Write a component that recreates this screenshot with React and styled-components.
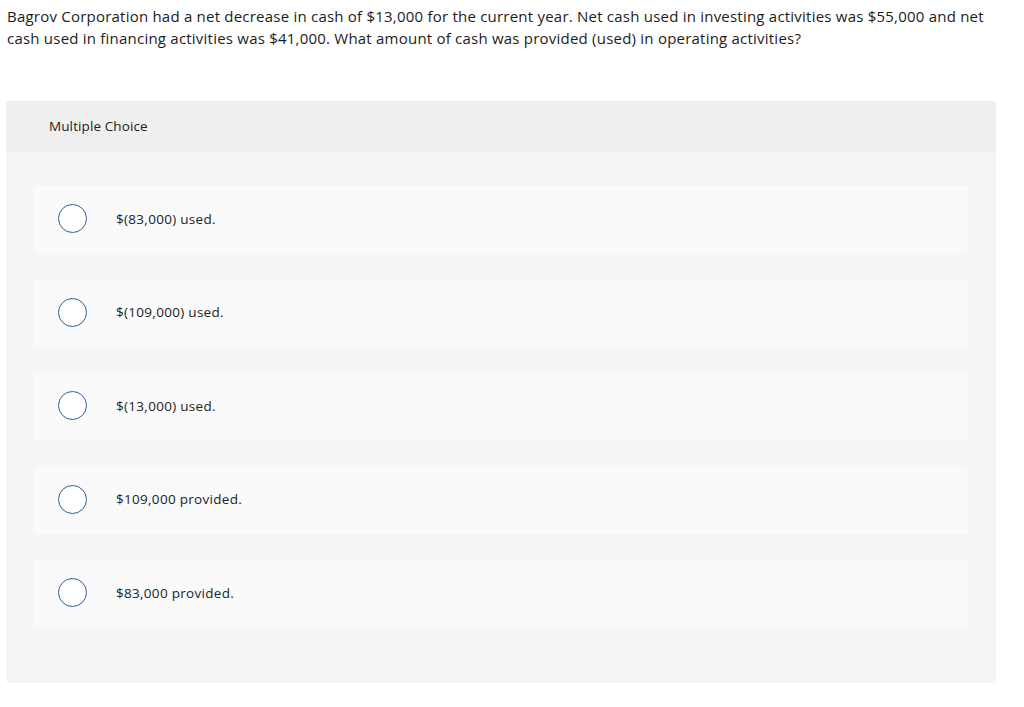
import React from "react";
import styled, { createGlobalStyle } from "styled-components";

const Global = createGlobalStyle`
  html, body { margin: 0; padding: 0; background: #fff; }
  body { font-family: "Open Sans", "Lato", sans-serif; color: #222; }
`;

const Page = styled.div`
  padding: 5px 6px 0 7px;
  width: 990px;
`;

const Question = styled.p`
  margin: 0;
  font-size: 15px;
  line-height: 22px;
  letter-spacing: 0.22px;
  color: #1c1c1c;
`;

const Panel = styled.div`
  margin-top: 52px;
  margin-left: -1px;
  width: 990px;
  background: #f5f5f5;
  border-radius: 4px;
  overflow: hidden;
`;

const Header = styled.div`
  height: 51px;
  background: #efefef;
  display: flex;
  align-items: center;
  padding-left: 43px;
  padding-bottom: 2px;
  box-sizing: border-box;
  font-size: 13.5px;
  letter-spacing: 0.1px;
  color: #222;
`;

const List = styled.div`
  display: flex;
  flex-direction: column;
  gap: 26.5px;
  padding: 34px 28px 56px 27px;
`;

const Option = styled.label`
  height: 67px;
  background: #fafafa;
  border-radius: 4px;
  display: flex;
  align-items: center;
  padding-left: 25px;
  padding-bottom: 2px;
  box-sizing: border-box;
`;

const Radio = styled.span`
  width: 27px;
  height: 27px;
  border: 1.5px solid #2e5f99;
  border-radius: 50%;
  background: #fff;
  flex-shrink: 0;
`;

const OptionText = styled.span`
  margin-left: 29px;
  font-size: 13.5px;
  letter-spacing: 0.3px;
  color: #222;
`;

const options = [
  "$(83,000) used.",
  "$(109,000) used.",
  "$(13,000) used.",
  "$109,000 provided.",
  "$83,000 provided.",
];

export default function App() {
  return (
    <>
      <Global />
      <Page>
        <Question>
          Bagrov Corporation had a net decrease in cash of $13,000 for the current year. Net cash used in investing activities was $55,000 and net cash used in financing activities was $41,000. What amount of cash was provided (used) in operating activities?
        </Question>
        <Panel>
          <Header>Multiple Choice</Header>
          <List>
            {options.map((o) => (
              <Option key={o}>
                <Radio />
                <OptionText>{o}</OptionText>
              </Option>
            ))}
          </List>
        </Panel>
      </Page>
    </>
  );
}
